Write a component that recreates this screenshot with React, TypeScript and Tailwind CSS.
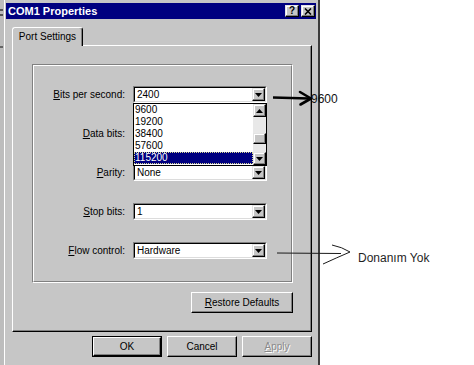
import React from 'react';

function DownTri() {
  return (
    <svg width="7" height="4" viewBox="0 0 7 4">
      <path d="M0 0H7L3.5 4Z" fill="#000" />
    </svg>
  );
}
function UpTri() {
  return (
    <svg width="7" height="4" viewBox="0 0 7 4">
      <path d="M0 4H7L3.5 0Z" fill="#000" />
    </svg>
  );
}

function SmallBtn({ children, className = '' }: { children?: React.ReactNode; className?: string }) {
  return (
    <div
      className={`bg-[#c6c6c6] border border-t-[#e4e4e4] border-l-[#e4e4e4] border-r-black border-b-black shadow-[inset_-1px_-1px_0_#808080,inset_1px_1px_0_#ffffff] flex items-center justify-center ${className}`}
    >
      {children}
    </div>
  );
}

function Combo({ value, children }: { value: string; children?: React.ReactNode }) {
  return (
    <div className="relative w-[134px] h-[17px]">
      <div className="w-full h-full border border-t-[#808080] border-l-[#808080] border-r-white border-b-white">
        <div className="w-full h-full flex bg-white border border-t-black border-l-black border-r-[#dcdcdc] border-b-[#dcdcdc]">
          <div className="flex-1 pl-[2px] text-[10px] leading-[13px] text-black">{value}</div>
          <SmallBtn className="w-[13px] h-full">
            <DownTri />
          </SmallBtn>
        </div>
      </div>
      {children}
    </div>
  );
}

function Row({ label, u, value, children }: { label: string; u: string; value: string; children?: React.ReactNode }) {
  return (
    <div className="flex items-center h-[17px]">
      <div className="w-[91px] mr-[8px] text-right text-[10px] leading-[17px] text-black whitespace-nowrap">
        <span className="underline underline-offset-[1px]">{u}</span>
        {label}
      </div>
      <Combo value={value}>{children}</Combo>
    </div>
  );
}

function DropList() {
  return (
    <div className="absolute left-0 top-[17px] z-10 w-[134px] h-[63px] border border-black bg-white flex">
      <div className="flex-1 flex flex-col">
        {['9600', '19200', '38400', '57600'].map((v) => (
          <div key={v} className="h-[12px] leading-[12px] pl-[1px] text-[10px] text-black">
            {v}
          </div>
        ))}
        <div className="h-[12px] leading-[10px] text-[10px] bg-[#000080] text-white border border-dotted border-[#d8d890]">
          115200
        </div>
      </div>
      <div className="w-[13px] flex flex-col bg-[#e8e8e8]">
        <SmallBtn className="h-[13px]">
          <UpTri />
        </SmallBtn>
        <div className="h-[16px]" />
        <SmallBtn className="h-[11px]" />
        <div className="flex-1" />
        <SmallBtn className="h-[13px]">
          <DownTri />
        </SmallBtn>
      </div>
    </div>
  );
}

function PushButton({ children, className = '', disabled = false, isDefault = false }: { children: React.ReactNode; className?: string; disabled?: boolean; isDefault?: boolean }) {
  const inner = (
    <div className="w-full h-full flex items-center justify-center border border-t-white border-l-white border-r-black border-b-black shadow-[inset_-1px_-1px_0_#808080] bg-[#c6c6c6]">
      <span
        className={`text-[10px] leading-none ${disabled ? 'text-[#8a8a8a] [text-shadow:1px_1px_0_#ffffff]' : 'text-black'}`}
      >
        {children}
      </span>
    </div>
  );
  if (isDefault) {
    return <div className={`border border-black ${className}`}>{inner}</div>;
  }
  return <div className={className}>{inner}</div>;
}

function Dialog() {
  return (
    <div className="w-[316px] h-full bg-[#c6c6c6] border-l border-l-white border-r-2 border-r-[#3c3c3c] flex flex-col pt-[3px]">
      {/* Title bar */}
      <div className="ml-[1px] mr-[2px] h-[16px] bg-[#000080] flex items-center pl-[2px]">
        <span className="text-white font-bold text-[11px] leading-none">COM1 Properties</span>
        <div className="ml-auto mr-[1px] flex gap-[2px]">
          <SmallBtn className="w-[14px] h-[12px]">
            <span className="text-[10px] font-bold leading-none text-black">?</span>
          </SmallBtn>
          <SmallBtn className="w-[14px] h-[12px]">
            <svg width="8" height="7" viewBox="0 0 8 7">
              <path d="M1 0.5L7 6.5M7 0.5L1 6.5" stroke="#000" strokeWidth="1.6" />
            </svg>
          </SmallBtn>
        </div>
      </div>

      {/* Tab */}
      <div className="ml-[7px] mt-[8px] w-[71px] h-[19px] relative z-10 bg-[#c6c6c6] border-t border-l border-r border-t-white border-l-white border-r-black rounded-t-[3px] shadow-[inset_-1px_0_0_#808080] flex items-center justify-center">
        <span className="text-[10px] leading-none text-black">Port Settings</span>
      </div>

      {/* Panel */}
      <div className="ml-[7px] mr-[6px] -mt-[1px] h-[287px] border border-t-white border-l-white border-r-black border-b-black shadow-[inset_-1px_-1px_0_#808080] flex flex-col">
        <div className="ml-[19px] mt-[18px] w-[261px] flex flex-col">
          <div className="h-[219px] border border-t-[#808080] border-l-[#808080] border-r-white border-b-white">
            <div className="h-full border border-t-white border-l-white border-r-[#808080] border-b-[#808080] pt-[20px] flex flex-col gap-[22px]">
              <Row u="B" label="its per second:" value="2400">
                <DropList />
              </Row>
              <Row u="D" label="ata bits:" value="" />
              <Row u="P" label="arity:" value="None" />
              <Row u="S" label="top bits:" value="1" />
              <Row u="F" label="low control:" value="Hardware" />
            </div>
          </div>
          <div className="mt-[9px] self-end">
            <PushButton className="w-[102px] h-[21px]">
              <span className="underline underline-offset-[1px]">R</span>estore Defaults
            </PushButton>
          </div>
        </div>
      </div>

      {/* Bottom buttons */}
      <div className="mt-[4px] mr-[6px] flex justify-end gap-[5px]">
        <PushButton isDefault className="w-[70px] h-[21px]">OK</PushButton>
        <PushButton className="w-[70px] h-[21px]">Cancel</PushButton>
        <PushButton disabled className="w-[70px] h-[21px]">
          <span className="underline underline-offset-[1px]">A</span>pply
        </PushButton>
      </div>
    </div>
  );
}

export default function App() {
  return (
    <div className="relative flex w-[474px] h-[365px] overflow-hidden bg-white font-['Liberation_Sans',Arial,sans-serif] text-black">
      {/* edge of a window behind */}
      <div className="w-[4px] h-full bg-[#bdbdbd] flex flex-col">
        <div className="h-[9px]" />
        <div className="h-[2px] w-[3px] bg-[#555]" />
        <div className="h-[3px]" />
        <div className="h-[2px] w-[3px] bg-[#555]" />
        <div className="h-[30px]" />
        <div className="h-[2px] w-[3px] bg-[#666]" />
      </div>
      <Dialog />
      <div className="flex-1 bg-white" />

      {/* Annotations */}
      <svg className="absolute left-0 top-0 z-20 pointer-events-none" width="474" height="365" viewBox="0 0 474 365">
        <path d="M273 97.5L309 98.5" stroke="#000" strokeWidth="2.6" fill="none" />
        <path d="M300 92L311 98.5L300.5 104.5" stroke="#000" strokeWidth="2.6" fill="none" strokeLinecap="round" strokeLinejoin="round" />
        <path d="M277 253L341 253.5" stroke="#1a1a1a" strokeWidth="1" fill="none" />
        <path d="M332 245Q342 247 350 252Q336 258 323 264" stroke="#1a1a1a" strokeWidth="1" fill="none" />
      </svg>
      <div className="absolute left-[311px] top-[92px] z-20 text-[12px] leading-[14px] text-[#111]">9600</div>
      <div className="absolute left-[358px] top-[251px] z-20 text-[12px] leading-[14px] text-[#1f1f1f]">Donanım Yok</div>
    </div>
  );
}
